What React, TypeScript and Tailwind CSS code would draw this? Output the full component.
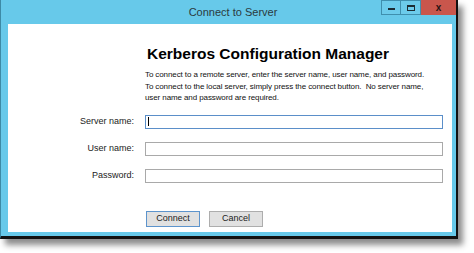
import React from "react";

const fieldRows = [
  { label: "Server name:", focused: true },
  { label: "User name:", focused: false },
  { label: "Password:", focused: false },
];

function TitleButtons() {
  return (
    <div className="absolute right-[-4px] top-0 flex h-[15px]">
      <div className="flex w-[20px] items-center justify-center border border-[#3f8fae] bg-[#6ccbeb]">
        <span className="mt-[3px] block h-[2px] w-[7px] bg-[#1c2c34]" />
      </div>
      <div className="flex w-[20px] items-center justify-center border border-l-0 border-[#3f8fae] bg-[#6ccbeb]">
        <span className="block h-[6px] w-[8px] border border-t-2 border-[#1c2c34]" />
      </div>
      <div className="flex w-[35px] items-center justify-center bg-[#c9564c] text-[10px] font-bold text-[#2a1414]">
        x
      </div>
    </div>
  );
}

export default function App() {
  return (
    <div className="h-[253px] w-[474px] bg-white font-['Liberation_Sans',Arial,sans-serif]">
      <div className="flex h-[239px] w-[458px] flex-col border-b-[3px] border-l border-r-2 border-b-[#111] border-l-[#3d8aa6] border-r-[#111] bg-[#67c9ea] pb-[4px] pl-[7px] pr-[4px] shadow-[5px_6px_6px_rgba(0,0,0,0.45)]">
        <div className="relative flex h-[24px] shrink-0 items-center justify-center">
          <span className="pl-[6px] text-[11px] text-[#2b3a40]">Connect to Server</span>
          <TitleButtons />
        </div>
        <div className="flex flex-1 flex-col bg-white">
          <div className="ml-[139px] mt-[21px] text-[15.5px] font-bold leading-[18px] text-black">
            Kerberos Configuration Manager
          </div>
          <p className="ml-[137px] mt-[6px] whitespace-nowrap text-[8px] leading-[11.5px] tracking-[-0.1px] text-[#111]">
            To connect to a remote server, enter the server name, user name, and password.
            <br />
            To connect to the local server, simply press the connect button.&nbsp;&nbsp;No server name,
            <br />
            user name and password are required.
          </p>
          <div className="mt-[11px] flex flex-col gap-[13px]">
            {fieldRows.map((row) => (
              <div key={row.label} className="flex items-center gap-[11px]">
                <span className="w-[126px] text-right text-[9px] text-[#222]">{row.label}</span>
                <div
                  className={
                    row.focused
                      ? "flex h-[14px] w-[298px] items-center border border-[#5b8fc9] bg-white pl-[2px]"
                      : "h-[14px] w-[298px] border border-[#a9a9a9] bg-white"
                  }
                >
                  {row.focused && <span className="block h-[9px] w-px bg-black" />}
                </div>
              </div>
            ))}
          </div>
          <div className="ml-[138px] mt-[28px] flex gap-[9px]">
            <button className="h-[16px] w-[54px] border border-[#5d94cc] bg-[#e1e1e1] text-[9px] text-[#222]">
              Connect
            </button>
            <button className="h-[16px] w-[54px] border border-[#adadad] bg-[#e1e1e1] text-[9px] text-[#222]">
              Cancel
            </button>
          </div>
        </div>
      </div>
    </div>
  );
}
